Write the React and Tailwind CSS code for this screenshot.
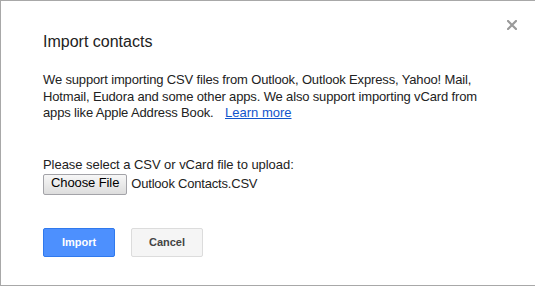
import React from 'react';

const CloseIcon = () => (
  <svg width="10" height="10" viewBox="0 0 10 10" className="block">
    <path d="M1 1 L9 9 M9 1 L1 9" stroke="#9a9a9a" strokeWidth="2.2" strokeLinecap="square" />
  </svg>
);

const App = () => {
  return (
    <div className="w-[535px] h-[287px] bg-white overflow-hidden font-['Liberation_Sans',Arial,sans-serif] text-[#222]">
      {/* Dialog (right edge runs past the window) */}
      <div className="relative h-[286px] border-t border-l border-b border-[#a8a8a8] pt-[32px] pl-[42px]">
        <button className="absolute top-[19px] left-[506px] p-0 cursor-pointer">
          <CloseIcon />
        </button>

        <h2 className="text-[16px] leading-[18px] font-normal">Import contacts</h2>

        <p className="mt-[21px] text-[13px] leading-[16.67px] whitespace-nowrap tracking-[-0.15px]">
          We support importing CSV files from Outlook, Outlook Express, Yahoo! Mail,
          <br />
          Hotmail, Eudora and some other apps. We also support importing vCard from
          <br />
          apps like Apple Address Book.{' '}
          <a href="#" className="ml-[8px] text-[#1155cc] underline tracking-normal">
            Learn more
          </a>
        </p>

        <div className="mt-[35px] text-[13px] leading-[16.67px] tracking-[-0.05px]">
          Please select a CSV or vCard file to upload:
        </div>
        <div className="flex items-start gap-[4px] text-[13px]">
          <div className="h-[21px] px-[7px] leading-[16px] border border-[#a3a3a8] rounded-[2px] bg-gradient-to-b from-[#f7f7f7] to-[#dddddd] text-black tracking-[-0.1px]">
            Choose File
          </div>
          <span className="leading-[18px] pt-[1px] tracking-[-0.2px]">Outlook Contacts.CSV</span>
        </div>

        <div className="mt-[33px] flex gap-[16px]">
          <button className="w-[72px] h-[29px] rounded-[2px] border border-[#3079ed] bg-[#4d90fe] text-white text-[11px] font-bold">
            Import
          </button>
          <button className="w-[72px] h-[29px] rounded-[2px] border border-[#dcdcdc] bg-[#f5f5f5] text-[#444] text-[11px] font-bold">
            Cancel
          </button>
        </div>
      </div>
    </div>
  );
};

export default App;
